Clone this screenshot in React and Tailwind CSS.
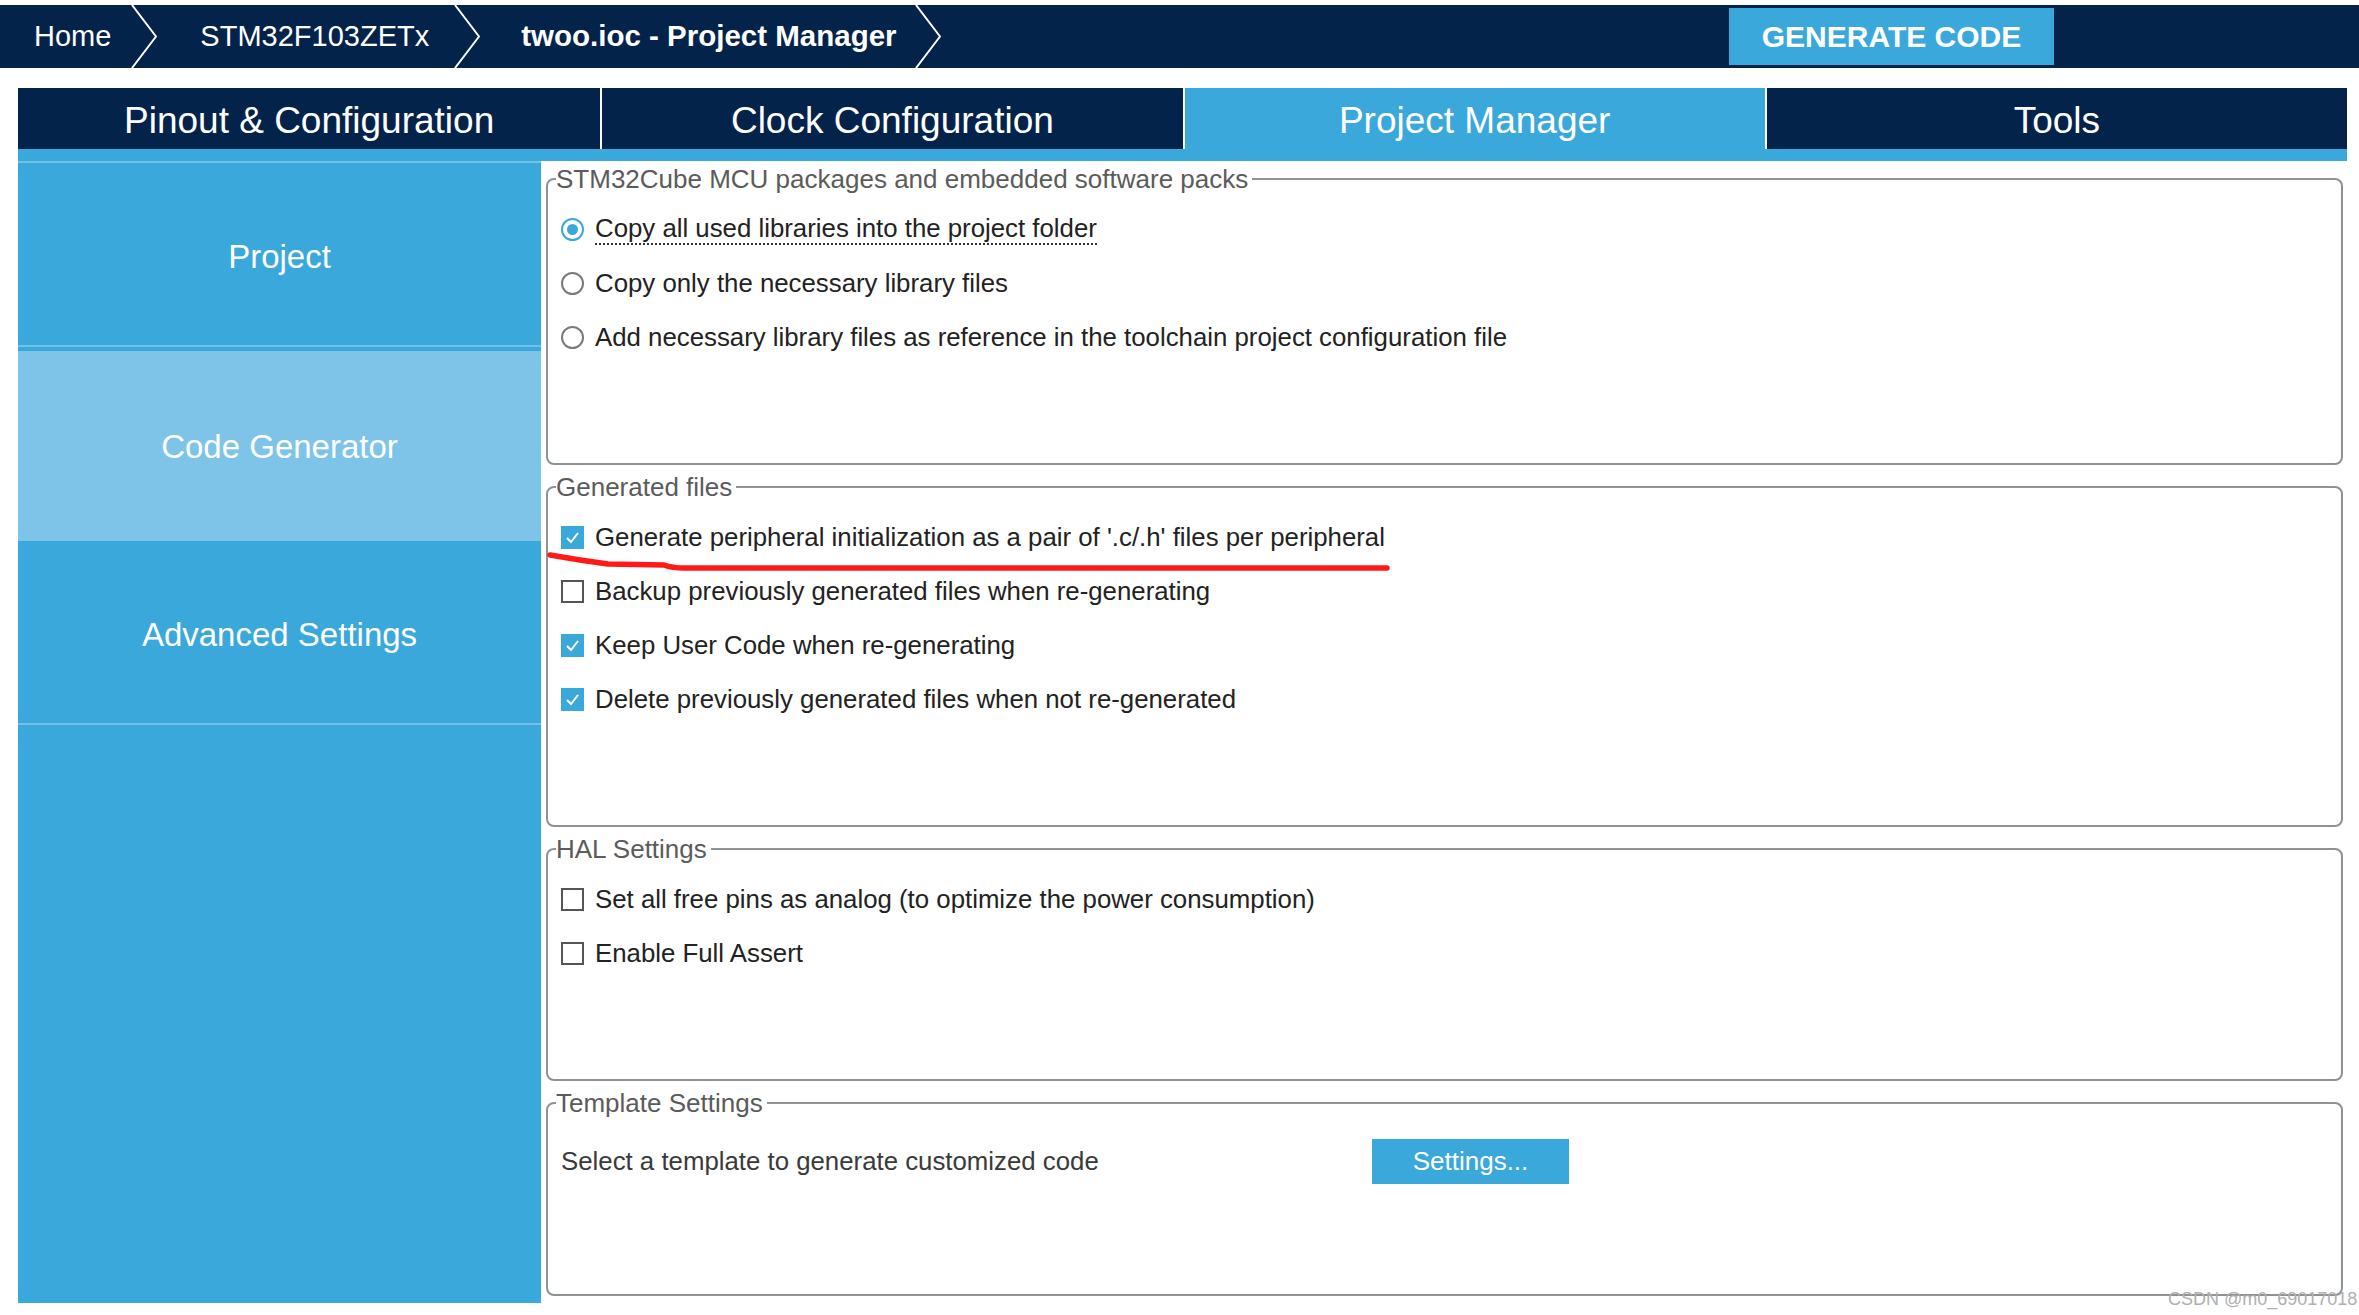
import React from "react";

const NAVY = "bg-[#03234b]";

const Chevron = ({ className = "" }) => (
  <svg width="26" height="63" viewBox="0 0 26 63" className={`shrink-0 ${className}`} aria-hidden>
    <polyline points="1,0 25,31.5 1,63" fill="none" stroke="#ffffff" strokeWidth="2" />
  </svg>
);

const Radio = ({ checked }) =>
  checked ? (
    <span className="flex h-[23px] w-[23px] shrink-0 items-center justify-center rounded-full border-2 border-[#3aa8db] bg-white">
      <span className="h-[11px] w-[11px] rounded-full bg-[#3aa8db]" />
    </span>
  ) : (
    <span className="h-[23px] w-[23px] shrink-0 rounded-full border-2 border-[#7a7a7a] bg-white" />
  );

const Check = ({ checked }) =>
  checked ? (
    <span className="flex h-[23px] w-[23px] shrink-0 items-center justify-center bg-[#3aa8db]">
      <svg width="15" height="13" viewBox="0 0 15 13" aria-hidden>
        <polyline points="2,7 6,11 13,2" fill="none" stroke="#ffffff" strokeWidth="2" />
      </svg>
    </span>
  ) : (
    <span className="h-[23px] w-[23px] shrink-0 border-2 border-[#555555] bg-white" />
  );

const Row = ({ control, children, dotted }) => (
  <div className="flex h-[54px] items-center gap-[11px]">
    {control}
    <span className={`text-[25.8px] leading-[30px] text-[#222222] ${dotted ? "border-b-2 border-dotted border-[#333333]" : ""}`}>
      {children}
    </span>
  </div>
);

const Group = ({ title, height, children, pad = "pt-[10px]" }) => (
  <fieldset className={`relative ${height} shrink-0 rounded-[8px] border-2 border-[#8d9297]`}>
    <legend className="ml-[8px] pr-[4px] text-[26px] leading-[26px] text-[#5b5b5b]">{title}</legend>
    <div className={`px-[13px] ${pad}`}>{children}</div>
  </fieldset>
);

const tabs = ["Pinout & Configuration", "Clock Configuration", "Project Manager", "Tools"];

export default function App() {
  return (
    <div className="relative h-[1315px] w-[2359px] overflow-hidden bg-white font-['Liberation_Sans',Arial,sans-serif]">
      <div className="pt-[5px]">
        <header className={`flex h-[63px] items-center ${NAVY} text-white`}>
          <span className="ml-[34px] text-[29px]">Home</span>
          <Chevron className="ml-[20px]" />
          <span className="ml-[43px] text-[29px]">STM32F103ZETx</span>
          <Chevron className="ml-[25px]" />
          <span className="ml-[41px] text-[29.5px] font-bold">twoo.ioc - Project Manager</span>
          <Chevron className="ml-[18px]" />
          <button
            type="button"
            className="ml-auto mr-[305px] flex h-[57px] w-[325px] items-center justify-center bg-[#3aa8db] text-[30px] font-bold text-white"
          >
            GENERATE CODE
          </button>
        </header>
      </div>

      <div className="ml-[18px] mt-[20px] w-[2329px]">
        <div className="grid h-[61px] grid-cols-4">
          {tabs.map((t, i) => (
            <div
              key={t}
              className={`flex items-center justify-center pt-[4px] text-[37px] text-white ${
                i === 2 ? "bg-[#3aa8db]" : NAVY
              } ${i > 0 ? "border-l-2 border-white" : ""}`}
            >
              {t}
            </div>
          ))}
        </div>
        <div className="h-[12px] bg-[#3aa8db]" />

        <div className="flex h-[1142px]">
          <aside className="flex w-[523px] shrink-0 flex-col bg-[#3aa8db] text-[33px] text-white">
            <div className="h-[2px] bg-[#74c1e8]" />
            <div className="flex h-[182px] items-center justify-center pt-[5px]">Project</div>
            <div className="h-[2px] bg-[#74c1e8]" />
            <div className="h-[4px]" />
            <div className="flex h-[190px] items-center justify-center bg-[#7dc4e8] pt-[2px]">Code Generator</div>
            <div className="flex h-[182px] items-center justify-center pt-[5px]">Advanced Settings</div>
            <div className="h-[2px] bg-[#74c1e8]" />
            <div className="flex-1" />
          </aside>

          <main className="flex flex-1 flex-col gap-[9px] bg-white pl-[5px] pr-[4px] pt-[5px]">
            <Group title="STM32Cube MCU packages and embedded software packs" height="h-[299px]">
              <Row control={<Radio checked />} dotted>
                Copy all used libraries into the project folder
              </Row>
              <Row control={<Radio />}>Copy only the necessary library files</Row>
              <Row control={<Radio />}>Add necessary library files as reference in the toolchain project configuration file</Row>
            </Group>

            <Group title="Generated files" height="h-[353px]">
              <Row control={<Check checked />}>Generate peripheral initialization as a pair of '.c/.h' files per peripheral</Row>
              <Row control={<Check />}>Backup previously generated files when re-generating</Row>
              <Row control={<Check checked />}>Keep User Code when re-generating</Row>
              <Row control={<Check checked />}>Delete previously generated files when not re-generated</Row>
            </Group>

            <Group title="HAL Settings" height="h-[245px]">
              <Row control={<Check />}>Set all free pins as analog (to optimize the power consumption)</Row>
              <Row control={<Check />}>Enable Full Assert</Row>
            </Group>

            <Group title="Template Settings" height="h-[206px]" pad="pt-[23px]">
              <div className="flex h-[45px] items-center">
                <span className="w-[811px] text-[25.8px] text-[#3a3a3a]">Select a template to generate customized code</span>
                <button type="button" className="h-[45px] w-[197px] bg-[#3aa8db] text-[26px] text-white">
                  Settings...
                </button>
              </div>
            </Group>
          </main>
        </div>
      </div>

      {/* hand-drawn annotation */}
      <svg className="pointer-events-none absolute left-0 top-0" width="2359" height="1315" aria-hidden>
        <path
          d="M550 555 Q 578 560 608 564 L 664 565 Q 672 568 684 568 L 1387 568"
          fill="none"
          stroke="#ff1a1a"
          strokeWidth="5.5"
          strokeLinecap="round"
          strokeLinejoin="round"
        />
      </svg>

      <span className="absolute left-[2168px] top-[1286px] text-[18px] text-[#b0b0b0]">CSDN @m0_69017018</span>
    </div>
  );
}
